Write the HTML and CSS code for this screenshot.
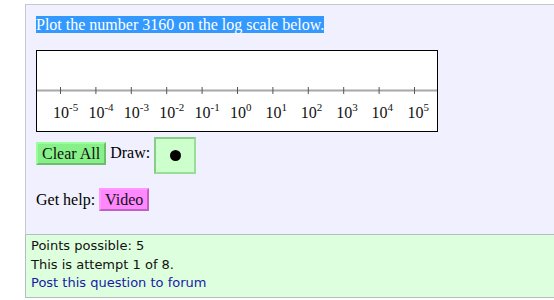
FILE: index.html
```html
<!DOCTYPE html>
<html>
<head>
<meta charset="utf-8">
<link rel="stylesheet" href="styles.css">
</head>
<body>
<div class="page">
  <div class="question">
    <p class="prompt"><span class="sel">Plot the number 3160 on the log scale below.</span></p>
    <div class="canvas">
      <svg width="400" height="80" viewBox="0 0 400 80" xmlns="http://www.w3.org/2000/svg">
        <line x1="0" y1="39.5" x2="400" y2="39.5" stroke="#a8a8a8" stroke-width="2"/>
        <g stroke="#555" stroke-width="1">
          <line x1="23.5" y1="36" x2="23.5" y2="43"/>
          <line x1="58.9" y1="36" x2="58.9" y2="43"/>
          <line x1="94.3" y1="36" x2="94.3" y2="43"/>
          <line x1="129.7" y1="36" x2="129.7" y2="43"/>
          <line x1="165.1" y1="36" x2="165.1" y2="43"/>
          <line x1="200.5" y1="36" x2="200.5" y2="43"/>
          <line x1="235.9" y1="36" x2="235.9" y2="43"/>
          <line x1="271.3" y1="36" x2="271.3" y2="43"/>
          <line x1="306.7" y1="36" x2="306.7" y2="43"/>
          <line x1="342.1" y1="36" x2="342.1" y2="43"/>
          <line x1="377.5" y1="36" x2="377.5" y2="43"/>
        </g>
        <g class="lbl">
          <text x="16" y="66.5">10<tspan class="sup" dy="-7">-5</tspan></text>
          <text x="51.4" y="66.5">10<tspan class="sup" dy="-7">-4</tspan></text>
          <text x="86.8" y="66.5">10<tspan class="sup" dy="-7">-3</tspan></text>
          <text x="122.2" y="66.5">10<tspan class="sup" dy="-7">-2</tspan></text>
          <text x="157.6" y="66.5">10<tspan class="sup" dy="-7">-1</tspan></text>
          <text x="193" y="66.5">10<tspan class="sup" dy="-7">0</tspan></text>
          <text x="228.4" y="66.5">10<tspan class="sup" dy="-7">1</tspan></text>
          <text x="263.8" y="66.5">10<tspan class="sup" dy="-7">2</tspan></text>
          <text x="299.2" y="66.5">10<tspan class="sup" dy="-7">3</tspan></text>
          <text x="334.6" y="66.5">10<tspan class="sup" dy="-7">4</tspan></text>
          <text x="370.5" y="66.5">10<tspan class="sup" dy="-7">5</tspan></text>
        </g>
      </svg>
    </div>
    <div class="tools">
      <span class="btn green">Clear All</span>
      <span class="label">Draw:</span>
      <span class="drawbox"><span class="dot"></span></span>
    </div>
    <div class="help">
      <span class="label">Get help:</span>
      <span class="btn pink">Video</span>
    </div>
  </div>
  <div class="info">
    <div>Points possible: 5</div>
    <div>This is attempt 1 of 8.</div>
    <div><a class="link" href="#">Post this question to forum</a></div>
  </div>
</div>
</body>
</html>
```
FILE: styles.css
```css
html, body {
  margin: 0;
  padding: 0;
  background: #ffffff;
  overflow: hidden;
}
.page {
  padding: 4px 0 0 25px;
}
.question {
  background: #f0f0fe;
  border-top: 1px solid #c4c8d4;
  border-left: 1px solid #c4c8d4;
  border-bottom: 1px solid #b4bcc4;
  padding: 11px 10px 23px 10px;
  font-family: "Liberation Serif", "Times New Roman", serif;
  font-size: 16px;
  color: #000;
}
.prompt {
  margin: 0;
  line-height: 18px;
}
.sel {
  background: #3399ff;
  color: #ffffff;
}
.canvas {
  margin-top: 16px;
  width: 400px;
  height: 80px;
  border: 1px solid #000;
  background: #fff;
}
.canvas svg {
  display: block;
}
.lbl text {
  font-family: "Liberation Serif", "Times New Roman", serif;
  font-size: 16px;
  fill: #111;
}
.lbl .sup {
  font-size: 11px;
}
.tools {
  display: flex;
  align-items: flex-start;
  margin-top: 5px;
}
.btn {
  display: inline-block;
  height: 23px;
  box-sizing: border-box;
  line-height: 19px;
  padding: 0 4px;
  font-size: 16px;
  color: #111;
}
.green {
  margin-top: 5px;
  background: #88f088;
  border-top: 2px solid #99ff99;
  border-left: 2px solid #99ff99;
  border-right: 2px solid #6cc06c;
  border-bottom: 2px solid #6cc06c;
}
.pink {
  background: #ff88ff;
  border-top: 2px solid #ff99ff;
  border-left: 2px solid #ff99ff;
  border-right: 2px solid #c060c0;
  border-bottom: 2px solid #c060c0;
}
.tools .label {
  margin: 7px 4px 0 4px;
  line-height: 18px;
}
.drawbox {
  display: flex;
  align-items: center;
  justify-content: center;
  box-sizing: border-box;
  width: 42px;
  height: 37px;
  background: #ccffcc;
  border: 2px solid #88cc88;
  border-right-color: #99dd99;
  border-bottom-color: #99dd99;
}
.dot {
  display: block;
  width: 11px;
  height: 11px;
  border-radius: 50%;
  background: #000;
}
.help {
  display: flex;
  align-items: center;
  margin-top: 14px;
}
.help .label {
  margin-right: 4px;
}
.info {
  background: #ddffdd;
  border-bottom: 1px solid #b4bcc4;
  border-left: 1px solid #b4bcc4;
  padding: 2px 0 4px 5px;
  font-family: "DejaVu Sans", Verdana, sans-serif;
  font-size: 13px;
  line-height: 18.5px;
  color: #111;
}
.link {
  color: #1a1aa8;
  text-decoration: none;
}
```
